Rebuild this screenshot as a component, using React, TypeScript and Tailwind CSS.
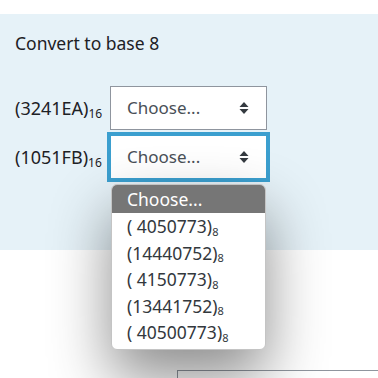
import React from "react";

const options = [
  { v: "( 4050773)" },
  { v: "(14440752)" },
  { v: "( 4150773)" },
  { v: "(13441752)" },
  { v: "( 40500773)" },
];

function Arrows() {
  return (
    <svg width="10" height="14" viewBox="0 0 10 14" className="shrink-0">
      <path d="M5 1 L9.5 6 H0.5 Z" fill="#343a40" />
      <path d="M5 13 L9.5 8 H0.5 Z" fill="#343a40" />
    </svg>
  );
}

function Sel({ focused }: { focused?: boolean }) {
  return (
    <div
      className={
        "flex h-[44px] w-[157px] items-center justify-between border bg-white pl-[16px] pr-[17px] text-[17px] text-[#495057] " +
        (focused ? "border-[#3b9fcf] shadow-[0_0_0_3px_#3b9fcf]" : "border-[#8f959e]")
      }
    >
      <span>Choose...</span>
      <Arrows />
    </div>
  );
}

export default function App() {
  return (
    <div className="h-[378px] w-[378px] overflow-hidden bg-white pt-[14px] text-[#1d2125]" style={{ fontFamily: "'Noto Sans', 'Open Sans', sans-serif" }}>
      <div className="h-[236px] bg-[#e6f2f8] pl-[15px] pt-[17px]">
        <div className="text-[17.5px] leading-[24px]">Convert to base 8</div>
        <div className="mt-[31px] flex flex-col gap-[5px]">
          <div className="flex items-center">
            <span className="w-[95px] text-[18px]">
              (3241EA)<sub className="text-[12px]">16</sub>
            </span>
            <Sel />
          </div>
          <div className="flex items-center">
            <span className="w-[95px] text-[18px]">
              (1051FB)<sub className="text-[12px]">16</sub>
            </span>
            <div className="relative">
              <Sel focused />
              <div className="absolute left-[1px] top-[49px] z-10 w-[155px] overflow-hidden rounded-[6px] border border-[#c4c4c4] bg-white pb-[3px] shadow-[0_28px_60px_rgba(0,0,0,0.45)]">
                <div className="h-[28px] bg-[#767676] pl-[15px] text-[17.5px] leading-[28px] text-white">Choose...</div>
                {options.map((o) => (
                  <div key={o.v} className="h-[26.5px] whitespace-pre pl-[15px] text-[17.5px] leading-[26px] text-[#33383d]">
                    {o.v}
                    <sub className="text-[11px]">8</sub>
                  </div>
                ))}
              </div>
            </div>
          </div>
        </div>
      </div>
      <div className="ml-[177px] mt-[120px] h-[40px] border-l border-t border-[#8f959e]" />
    </div>
  );
}
